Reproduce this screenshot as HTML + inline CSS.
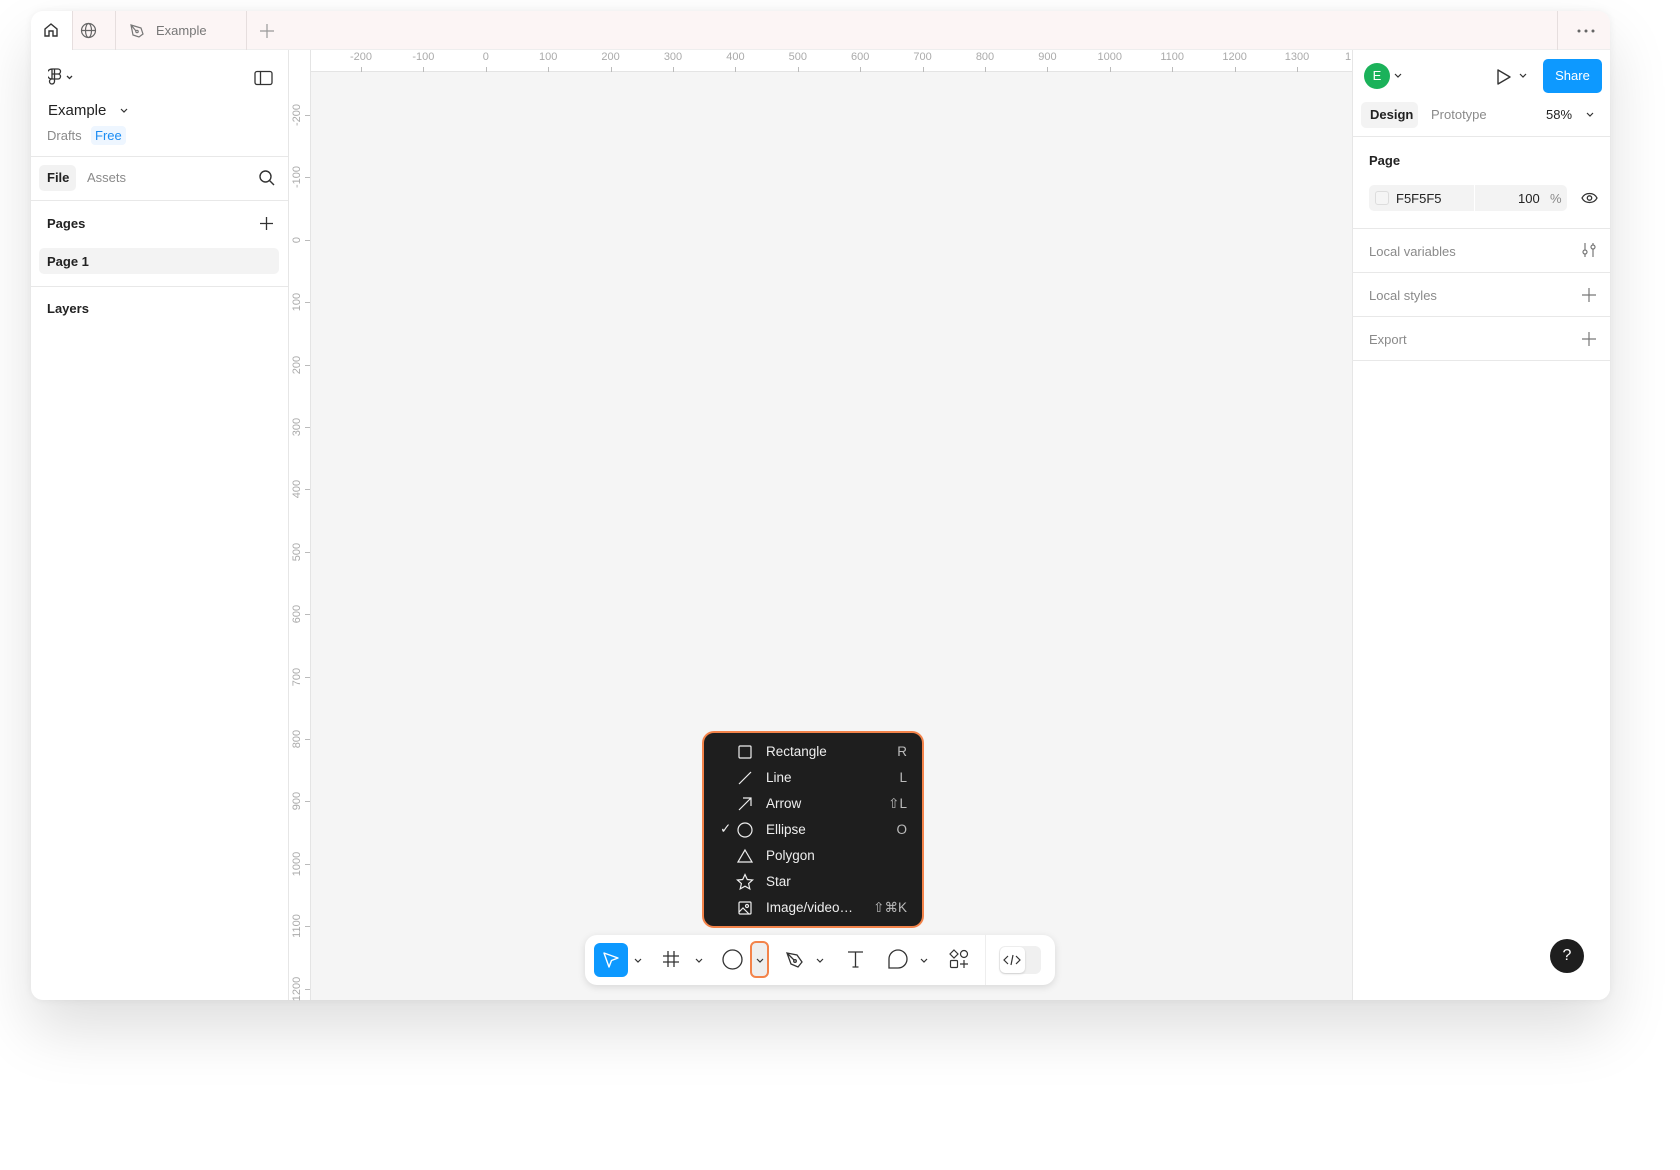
<!DOCTYPE html>
<html><head><meta charset="utf-8"><style>
*{box-sizing:border-box;margin:0;padding:0}
body{width:1680px;height:1170px;background:#fff;font-family:"Liberation Sans",sans-serif;font-size:13px;color:#222;position:relative;overflow:hidden}
.win{position:absolute;left:31px;top:11px;width:1579px;height:989px;border-radius:12px;background:#fff;overflow:hidden;box-shadow:0 30px 60px rgba(0,0,0,.13),0 0 8px rgba(0,0,0,.06)}
.abs{position:absolute}
.tabs{left:0;top:0;width:100%;height:39px;background:#fcf5f5;border-bottom:1px solid #eee}
.sep{position:absolute;top:0;width:1px;height:39px;background:#e6dede}
.txt{position:absolute;white-space:nowrap}
.g{color:#8a8a8a}
.hr{position:absolute;height:1px;background:#e8e8e8}
.rl{position:absolute;font-size:11px;color:#aaa}
.menu{position:absolute;left:702px;top:731px;width:222px;height:197px;background:#1e1e1e;border:2px solid #f3834a;border-radius:12px;color:#eee;font-size:13.5px}
.mi{position:absolute;left:0;width:100%;height:26px}
.mi span{position:absolute;top:5px}
.mi .k{right:15px;color:#bbb}
svg{position:absolute}
</style></head><body>
<div class="win">
 <div class="abs tabs">
  <div class="abs" style="left:0;top:0;width:41px;height:40px;background:#fff"></div>
  <svg style="left:11px;top:10px" width="18" height="18" viewBox="0 0 18 18" fill="none" stroke="#333" stroke-width="1.4"><path d="M3 8 L9 3 L15 8 V15 H11 V10 H7 V15 H3 Z"/></svg>
  <div class="sep" style="left:41px"></div>
  <svg style="left:49px;top:11px" width="17" height="17" viewBox="0 0 17 17" fill="none" stroke="#666" stroke-width="1.2"><circle cx="8.5" cy="8.5" r="7"/><ellipse cx="8.5" cy="8.5" rx="3" ry="7"/><path d="M1.5 8.5h14"/></svg>
  <div class="sep" style="left:84px"></div>
  <svg style="left:98px;top:12px" width="16" height="16" viewBox="0 0 16 16" fill="none" stroke="#777" stroke-width="1.2"><path d="M2 2 L12 5 L14 11 L10 14 L4 12 Z M2 2 L7 8"/><circle cx="8" cy="8.5" r="1.2"/></svg>
  <div class="txt g" style="left:125px;top:12px;font-size:13px;color:#777">Example</div>
  <div class="sep" style="left:215px"></div>
  <svg style="left:229px;top:13px" width="14" height="14" viewBox="0 0 14 14" stroke="#999" stroke-width="1.2"><path d="M7 0v14M0 7h14"/></svg>
  <div class="sep" style="left:1526px"></div>
  <svg style="left:1545px;top:17px" width="20" height="6" viewBox="0 0 20 6" fill="#666"><circle cx="3" cy="3" r="1.5"/><circle cx="10" cy="3" r="1.5"/><circle cx="17" cy="3" r="1.5"/></svg>
 </div>
 <div class="abs" style="left:257px;top:39px;width:1px;height:950px;background:#e6e6e6"></div>
 <svg style="left:17px;top:56px" width="36" height="20" viewBox="0 0 36 20" fill="none" stroke="#333" stroke-width="1.3"><path d="M4 2h6a2.5 2.5 0 0 1 0 5H4zM4 7h6a2.5 2.5 0 0 1 0 5H4zM4 2a2.5 2.5 0 0 0 0 10a2.5 2.5 0 1 0 2.5 2.5V2"/><path d="M19 9l2.5 2.5L24 9"/></svg>
 <svg style="left:223px;top:59px" width="19" height="16" viewBox="0 0 19 16" fill="none" stroke="#333" stroke-width="1.3"><rect x="1" y="1.5" width="17" height="13" rx="2"/><path d="M6.5 1.5v13"/></svg>
 <div class="txt" style="left:17px;top:91px;font-size:15px;color:#222">Example</div>
 <svg style="left:89px;top:97px" width="8" height="6" viewBox="0 0 8 6" fill="none" stroke="#333" stroke-width="1.2"><path d="M1 1l3 3 3-3"/></svg>
 <div class="txt g" style="left:16px;top:117px">Drafts</div>
 <div class="abs" style="left:60px;top:115px;width:35px;height:19px;background:#eef6ff;border-radius:4px"></div>
 <div class="txt" style="left:64px;top:117px;color:#1b8cf3">Free</div>
 <div class="hr" style="left:0;top:145px;width:257px"></div>
 <div class="abs" style="left:8px;top:154px;width:37px;height:26px;background:#f2f2f2;border-radius:5px"></div>
 <div class="txt" style="left:16px;top:159px;font-weight:bold;color:#222">File</div>
 <div class="txt g" style="left:56px;top:159px">Assets</div>
 <svg style="left:227px;top:158px" width="18" height="18" viewBox="0 0 18 18" fill="none" stroke="#333" stroke-width="1.4"><circle cx="7.5" cy="7.5" r="5.5"/><path d="M11.5 11.5L16 16"/></svg>
 <div class="hr" style="left:0;top:189px;width:257px"></div>
 <div class="txt" style="left:16px;top:205px;font-weight:bold">Pages</div>
 <svg style="left:228px;top:205px" width="15" height="15" viewBox="0 0 15 15" stroke="#333" stroke-width="1.3"><path d="M7.5 1v13M1 7.5h13"/></svg>
 <div class="abs" style="left:8px;top:237px;width:240px;height:26px;background:#f3f3f3;border-radius:5px"></div>
 <div class="txt" style="left:16px;top:243px;font-weight:bold">Page 1</div>
 <div class="hr" style="left:0;top:275px;width:257px"></div>
 <div class="txt" style="left:16px;top:290px;font-weight:bold">Layers</div>
 <div class="abs" style="left:258px;top:39px;width:1063px;height:950px;background:#f5f5f5"></div>
 <div class="abs" style="left:258px;top:39px;width:1063px;height:22px;background:#fff;border-bottom:1px solid #e4e4e4"></div>
 <div class="abs" style="left:258px;top:39px;width:22px;height:950px;background:#fff;border-right:1px solid #e4e4e4"></div>
 <div class="abs" style="left:1321px;top:39px;width:258px;height:950px;background:#fff;border-left:1px solid #e6e6e6"></div>
 <div class="abs" style="left:1333px;top:52px;width:26px;height:26px;border-radius:50%;background:#1bb25a;color:#fff;text-align:center;line-height:26px;font-size:13px">E</div>
 <svg style="left:1363px;top:62px" width="8" height="6" viewBox="0 0 8 6" fill="none" stroke="#333" stroke-width="1.2"><path d="M1 1l3 3 3-3"/></svg>
 <svg style="left:1465px;top:57px" width="16" height="18" viewBox="0 0 16 18" fill="none" stroke="#333" stroke-width="1.4"><path d="M2 2L14 9L2 16Z" stroke-linejoin="round"/></svg>
 <svg style="left:1488px;top:62px" width="8" height="6" viewBox="0 0 8 6" fill="none" stroke="#333" stroke-width="1.2"><path d="M1 1l3 3 3-3"/></svg>
 <div class="abs" style="left:1512px;top:48px;width:59px;height:34px;background:#0d99ff;border-radius:5px;color:#fff;text-align:center;line-height:34px;font-size:13px">Share</div>
 <div class="abs" style="left:1330px;top:91px;width:57px;height:26px;background:#f3f3f3;border-radius:5px"></div>
 <div class="txt" style="left:1339px;top:96px;font-weight:bold">Design</div>
 <div class="txt g" style="left:1400px;top:96px">Prototype</div>
 <div class="txt" style="left:1515px;top:96px">58%</div>
 <svg style="left:1555px;top:101px" width="8" height="6" viewBox="0 0 8 6" fill="none" stroke="#333" stroke-width="1.2"><path d="M1 1l3 3 3-3"/></svg>
 <div class="hr" style="left:1321px;top:125px;width:258px"></div>
 <div class="txt" style="left:1338px;top:142px;font-weight:bold">Page</div>
 <div class="abs" style="left:1338px;top:174px;width:198px;height:26px;background:#f3f3f3;border-radius:5px"></div>
 <div class="abs" style="left:1443px;top:174px;width:1px;height:26px;background:#fff"></div>
 <div class="abs" style="left:1344px;top:180px;width:14px;height:14px;border:1px solid #ddd;border-radius:3px;background:#f5f5f5"></div>
 <div class="txt" style="left:1365px;top:180px">F5F5F5</div>
 <div class="txt" style="left:1487px;top:180px">100</div>
 <div class="txt g" style="left:1519px;top:180px">%</div>
 <svg style="left:1550px;top:180px" width="17" height="14" viewBox="0 0 17 14" fill="none" stroke="#333" stroke-width="1.3"><path d="M1 7C4 1 13 1 16 7C13 13 4 13 1 7Z"/><circle cx="8.5" cy="7" r="2.2"/></svg>
 <div class="hr" style="left:1321px;top:217px;width:258px"></div>
 <div class="txt g" style="left:1338px;top:233px">Local variables</div>
 <svg style="left:1550px;top:231px" width="16" height="16" viewBox="0 0 16 16" fill="none" stroke="#777" stroke-width="1.2"><path d="M4 1v14M12 1v14"/><circle cx="4" cy="10" r="2" fill="#fff"/><circle cx="12" cy="5" r="2" fill="#fff"/></svg>
 <div class="hr" style="left:1321px;top:261px;width:258px"></div>
 <div class="txt g" style="left:1338px;top:277px">Local styles</div>
 <svg style="left:1551px;top:277px" width="14" height="14" viewBox="0 0 14 14" stroke="#777" stroke-width="1.2"><path d="M7 0v14M0 7h14"/></svg>
 <div class="hr" style="left:1321px;top:305px;width:258px"></div>
 <div class="txt g" style="left:1338px;top:321px">Export</div>
 <svg style="left:1551px;top:321px" width="14" height="14" viewBox="0 0 14 14" stroke="#777" stroke-width="1.2"><path d="M7 0v14M0 7h14"/></svg>
 <div class="hr" style="left:1321px;top:349px;width:258px"></div>
 <div class="abs" style="left:1519px;top:928px;width:34px;height:34px;border-radius:50%;background:#1e1e1e;color:#fff;text-align:center;line-height:34px;font-size:16px">?</div>
</div>

<div id="rulers"></div>
<script>
var h='';
var nums=[-200,-100,0,100,200,300,400,500,600,700,800,900,1000,1100,1200,1300];
nums.forEach(function(n){var x=361+(n+200)*0.624;
h+='<div class="rl" style="left:'+(x-20)+'px;top:51px;width:40px;text-align:center">'+n+'</div><div class="abs" style="left:'+x+'px;top:67px;width:1px;height:5px;background:#bbb"></div>';});
h+='<div class="rl" style="left:1345px;top:51px">1</div>';
var vn=[-200,-100,0,100,200,300,400,500,600,700,800,900,1000,1100,1200];
vn.forEach(function(n){var y=115+(n+200)*0.624;
h+='<div class="rl" style="left:277px;top:'+(y-7)+'px;width:40px;height:14px;line-height:14px;text-align:center;transform:rotate(-90deg)">'+n+'</div><div class="abs" style="left:305px;top:'+y+'px;width:5px;height:1px;background:#bbb"></div>';});
document.getElementById('rulers').innerHTML=h;
</script>

<div class="menu">
 <div class="mi" style="top:6px"><svg style="left:34px;top:6px" width="14" height="14" viewBox="0 0 14 14" fill="none" stroke="#eee" stroke-width="1.2"><rect x="1" y="1" width="12" height="12" rx="1"/></svg><span style="left:62px">Rectangle</span><span class="k">R</span></div>
 <div class="mi" style="top:32px"><svg style="left:34px;top:6px" width="14" height="14" viewBox="0 0 14 14" fill="none" stroke="#eee" stroke-width="1.2"><path d="M1 13L13 1"/></svg><span style="left:62px">Line</span><span class="k">L</span></div>
 <div class="mi" style="top:58px"><svg style="left:34px;top:6px" width="14" height="14" viewBox="0 0 14 14" fill="none" stroke="#eee" stroke-width="1.2"><path d="M1 13L13 1M5 1h8v8"/></svg><span style="left:62px">Arrow</span><span class="k">⇧L</span></div>
 <div class="mi" style="top:84px"><span style="left:16px;top:4px">✓</span><svg style="left:33px;top:5px" width="16" height="16" viewBox="0 0 16 16" fill="none" stroke="#eee" stroke-width="1.2"><circle cx="8" cy="8" r="7"/></svg><span style="left:62px">Ellipse</span><span class="k">O</span></div>
 <div class="mi" style="top:110px"><svg style="left:33px;top:5px" width="16" height="16" viewBox="0 0 16 16" fill="none" stroke="#eee" stroke-width="1.2"><path d="M8 2L15 14H1Z"/></svg><span style="left:62px">Polygon</span></div>
 <div class="mi" style="top:136px"><svg style="left:32px;top:4px" width="18" height="18" viewBox="0 0 18 18" fill="none" stroke="#eee" stroke-width="1.2"><path d="M9 1.5l2.3 5 5.3.5-4 3.6 1.2 5.3L9 13.2 4.2 15.9l1.2-5.3-4-3.6 5.3-.5z"/></svg><span style="left:62px">Star</span></div>
 <div class="mi" style="top:162px"><svg style="left:34px;top:6px" width="14" height="14" viewBox="0 0 14 14" fill="none" stroke="#eee" stroke-width="1.2"><rect x="1" y="1" width="12" height="12" rx="1"/><circle cx="9" cy="5" r="1.5"/><path d="M1 11l4-4 6 6"/></svg><span style="left:62px">Image/video…</span><span class="k">⇧⌘K</span></div>
</div>

<div class="abs" style="left:585px;top:935px;width:470px;height:50px;background:#fff;border-radius:12px;box-shadow:0 2px 8px rgba(0,0,0,.12)"></div>
<div class="abs" style="left:594px;top:943px;width:34px;height:34px;background:#0d99ff;border-radius:6px"></div>
<svg style="left:602px;top:951px" width="18" height="18" viewBox="0 0 18 18" fill="none" stroke="#fff" stroke-width="1.4"><path d="M2 2L16 7L9.5 9.5L7 16Z" stroke-linejoin="round"/></svg>
<svg style="left:634px;top:958px" width="8" height="6" viewBox="0 0 8 6" fill="none" stroke="#333" stroke-width="1.2"><path d="M1 1l3 3 3-3"/></svg>
<svg style="left:662px;top:950px" width="18" height="18" viewBox="0 0 18 18" fill="none" stroke="#333" stroke-width="1.3"><path d="M6 1v16M12 1v16M1 6h16M1 12h16"/></svg>
<svg style="left:695px;top:958px" width="8" height="6" viewBox="0 0 8 6" fill="none" stroke="#333" stroke-width="1.2"><path d="M1 1l3 3 3-3"/></svg>
<svg style="left:722px;top:949px" width="21" height="21" viewBox="0 0 21 21" fill="none" stroke="#333" stroke-width="1.3"><circle cx="10.5" cy="10.5" r="9.5"/></svg>
<div class="abs" style="left:750px;top:941px;width:19px;height:37px;border:2px solid #f3834a;border-radius:6px;background:#eee"></div>
<svg style="left:756px;top:958px" width="8" height="6" viewBox="0 0 8 6" fill="none" stroke="#333" stroke-width="1.2"><path d="M1 1l3 3 3-3"/></svg>
<svg style="left:785px;top:950px" width="20" height="20" viewBox="0 0 20 20" fill="none" stroke="#333" stroke-width="1.3"><path d="M2 3L12 5L17 12L13 17L6 14Z M2 3L9 10"/><circle cx="10" cy="11" r="1.3"/></svg>
<svg style="left:816px;top:958px" width="8" height="6" viewBox="0 0 8 6" fill="none" stroke="#333" stroke-width="1.2"><path d="M1 1l3 3 3-3"/></svg>
<svg style="left:846px;top:950px" width="19" height="19" viewBox="0 0 19 19" fill="none" stroke="#333" stroke-width="1.3"><path d="M2 2h15M9.5 2v15M6.5 17h6"/></svg>
<svg style="left:888px;top:949px" width="20" height="20" viewBox="0 0 20 20" fill="none" stroke="#333" stroke-width="1.3"><path d="M10 1a9 9 0 1 1 0 18H1v-9a9 9 0 0 1 9-9Z"/></svg>
<svg style="left:920px;top:958px" width="8" height="6" viewBox="0 0 8 6" fill="none" stroke="#333" stroke-width="1.2"><path d="M1 1l3 3 3-3"/></svg>
<svg style="left:949px;top:949px" width="20" height="20" viewBox="0 0 20 20" fill="none" stroke="#333" stroke-width="1.2"><path d="M5 1l4 4-4 4-4-4z"/><circle cx="15" cy="5" r="3.5"/><rect x="1.5" y="11.5" width="7" height="7" rx="1"/><path d="M15 11v8M11 15h8"/></svg>
<div class="abs" style="left:985px;top:935px;width:1px;height:50px;background:#eee"></div>
<div class="abs" style="left:999px;top:946px;width:42px;height:28px;background:#f0f0f0;border-radius:6px"></div>
<div class="abs" style="left:1000px;top:947px;width:25px;height:26px;background:#fff;border-radius:5px;box-shadow:0 1px 2px rgba(0,0,0,.15)"></div>
<svg style="left:1003px;top:953px" width="18" height="14" viewBox="0 0 18 14" fill="none" stroke="#333" stroke-width="1.2"><path d="M5 3L1 7l4 4M13 3l4 4-4 4M10 2L8 12"/></svg>
</body></html>
